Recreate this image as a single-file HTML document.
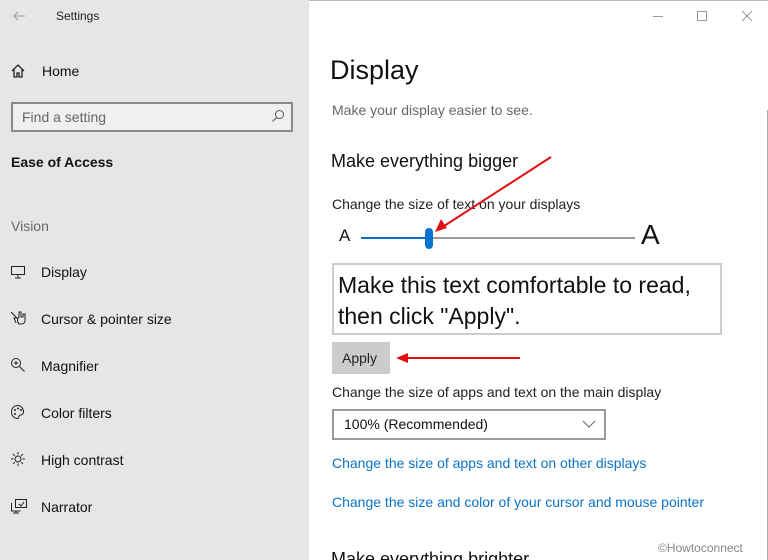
<!DOCTYPE html>
<html><head><meta charset="utf-8"><style>
*{margin:0;padding:0;box-sizing:border-box}
html{width:768px;height:560px;overflow:hidden}
body{width:768px;height:560px;overflow:hidden;position:relative;background:#fff;font-family:"Liberation Sans",sans-serif;color:#000}
.side{position:absolute;left:0;top:0;width:309px;height:560px;background:#e6e6e6}
.t{position:absolute;white-space:nowrap}
.nav{position:absolute;left:41px;font-size:14px;color:#111}
.ic{position:absolute;left:10px}
a{color:#0a73c9;text-decoration:none}
</style></head><body>
<div style="position:absolute;left:0;top:0;width:768px;height:1px;background:#bbb"></div>
<div class="side">
 <svg class="ic" style="left:12px;top:10px" width="14" height="12"><path d="M13 6H2M6 2L2 6l4 4" stroke="#999" fill="none" stroke-width="1"/></svg>
 <div class="t" style="left:56px;top:9px;font-size:12px;color:#222">Settings</div>
 <svg class="ic" style="top:63px" width="16" height="16"><path d="M2 8L8 2l6 6M4 6v8h3v-4h2v4h3V6" stroke="#222" fill="none" stroke-width="1.3"/></svg>
 <div class="t" style="left:42px;top:63px;font-size:14px;color:#111">Home</div>
 <div style="position:absolute;left:11px;top:102px;width:282px;height:30px;border:2px solid #8a8a8a;background:#f0f0f0"></div>
 <div class="t" style="left:22px;top:109px;font-size:14px;color:#666">Find a setting</div>
 <svg style="position:absolute;left:271px;top:109px" width="14" height="14"><circle cx="8.5" cy="5.5" r="4" stroke="#555" fill="none"/><path d="M5.5 8.5L1.5 12.5" stroke="#555"/></svg>
 <div class="t" style="left:11px;top:154px;font-size:14px;font-weight:bold;color:#111">Ease of Access</div>
 <div class="t" style="left:11px;top:218px;font-size:14px;color:#666">Vision</div>
 <svg class="ic" style="top:264px" width="16" height="16"><rect x="1.5" y="2.5" width="13" height="8" stroke="#222" fill="none"/><path d="M8 11v3M5 14h6" stroke="#222"/></svg>
 <div class="nav" style="top:264px">Display</div>
 <svg class="ic" style="top:310px" width="18" height="16"><path d="M1 2l6 6-3 0 2 5M9 14c-2-2-2-5 0-7V2h2v5h2v-3h2v7c0 2-2 3-4 3z" stroke="#222" fill="none"/></svg>
 <div class="nav" style="top:311px">Cursor &amp; pointer size</div>
 <svg class="ic" style="top:357px" width="16" height="16"><circle cx="6" cy="6" r="4.5" stroke="#222" fill="none"/><path d="M9.5 9.5l5 5M6 4v4M4 6h4" stroke="#222"/></svg>
 <div class="nav" style="top:358px">Magnifier</div>
 <svg class="ic" style="top:404px" width="16" height="16"><path d="M8 1.5C4 1.5 1.5 4 1.5 8s3 6.5 6 6.5c1.5 0 1-2 2-3s4 0 4-3.5c0-4-3-6.5-5.5-6.5z" stroke="#222" fill="none"/><circle cx="5" cy="6" r="1" fill="#222"/><circle cx="8" cy="4.5" r="1" fill="#222"/><circle cx="11" cy="6" r="1" fill="#222"/><circle cx="5" cy="10" r="1" fill="#222"/></svg>
 <div class="nav" style="top:405px">Color filters</div>
 <svg class="ic" style="top:451px" width="16" height="16"><circle cx="8" cy="8" r="3" stroke="#222" fill="none"/><path d="M8 1v2.5M8 12.5V15M1 8h2.5M12.5 8H15M3 3l1.8 1.8M11.2 11.2L13 13M3 13l1.8-1.8M11.2 4.8L13 3" stroke="#222"/></svg>
 <div class="nav" style="top:452px">High contrast</div>
 <svg class="ic" style="top:498px" width="18" height="16"><rect x="5.5" y="1.5" width="11" height="8" stroke="#222" fill="none"/><path d="M1.5 5v8h9M6 13v2M3 15h6M9 6l2 2 3-4" stroke="#222" fill="none"/></svg>
 <div class="nav" style="top:499px">Narrator</div>
</div>
<div style="position:absolute;left:653px;top:16px;width:10px;height:1px;background:#999"></div>
<div style="position:absolute;left:697px;top:11px;width:10px;height:10px;border:1px solid #999"></div>
<svg style="position:absolute;left:741px;top:10px" width="12" height="12"><path d="M1 1l10 10M11 1L1 11" stroke="#999"/></svg>
<div style="position:absolute;left:767px;top:110px;width:1px;height:450px;background:#aaa"></div>

<div class="t" style="left:330px;top:55px;font-size:27px;color:#111">Display</div>
<div class="t" style="left:332px;top:102px;font-size:14px;color:#666">Make your display easier to see.</div>
<div class="t" style="left:331px;top:151px;font-size:18px;color:#111">Make everything bigger</div>
<div class="t" style="left:332px;top:196px;font-size:14px;color:#222">Change the size of text on your displays</div>
<div class="t" style="left:339px;top:226px;font-size:17px;color:#111">A</div>
<div style="position:absolute;left:361px;top:237px;width:68px;height:2px;background:#0a6ec4"></div>
<div style="position:absolute;left:429px;top:237px;width:206px;height:2px;background:#999"></div>
<div style="position:absolute;left:425px;top:228px;width:8px;height:21px;border-radius:4px;background:#0a73d0"></div>
<div class="t" style="left:641px;top:219px;font-size:28px;color:#111">A</div>
<div style="position:absolute;left:332px;top:263px;width:390px;height:72px;border:2px solid #ccc"></div>
<div class="t" style="left:338px;top:270px;font-size:23px;line-height:31px;color:#111">Make this text comfortable to read,<br>then click "Apply".</div>
<div style="position:absolute;left:332px;top:342px;width:58px;height:32px;background:#ccc"></div>
<div class="t" style="left:342px;top:350px;font-size:14px;color:#222">Apply</div>
<div class="t" style="left:332px;top:384px;font-size:14px;color:#222">Change the size of apps and text on the main display</div>
<div style="position:absolute;left:332px;top:409px;width:274px;height:31px;border:2px solid #999"></div>
<div class="t" style="left:344px;top:416px;font-size:14px;color:#111">100% (Recommended)</div>
<svg style="position:absolute;left:582px;top:419px" width="14" height="10"><path d="M1 2l6 6 6-6" stroke="#666" fill="none"/></svg>
<div class="t" style="left:332px;top:455px;font-size:14px"><a>Change the size of apps and text on other displays</a></div>
<div class="t" style="left:332px;top:494px;font-size:14px"><a>Change the size and color of your cursor and mouse pointer</a></div>
<div class="t" style="left:331px;top:549px;font-size:18px;color:#111">Make everything brighter</div>
<div class="t" style="left:658px;top:541px;font-size:12px;color:#888">©Howtoconnect</div>
<svg style="position:absolute;left:0;top:0" width="768" height="560">
 <path d="M551 157L441 228" stroke="#e01010" stroke-width="2"/>
 <path d="M435 232l6-13 6 9z" fill="#e01010"/>
 <path d="M520 358H404" stroke="#e01010" stroke-width="2"/>
 <path d="M396 358l12-5v10z" fill="#e01010"/>
</svg>
</body></html>
